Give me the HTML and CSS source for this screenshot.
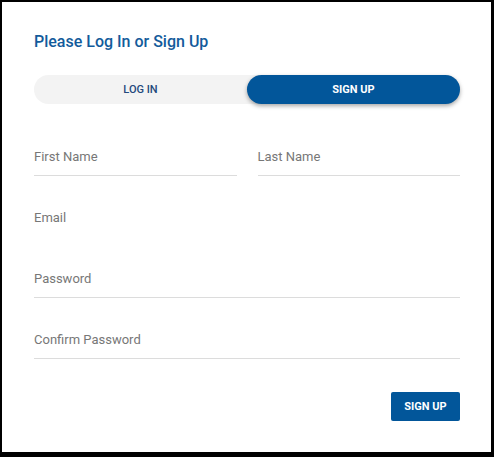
FILE: index.html
```html
<!DOCTYPE html>
<html lang="en">
<head>
<meta charset="utf-8">
<title>Please Log In or Sign Up</title>
<link rel="stylesheet" href="styles.css">
</head>
<body>
<div class="card">
  <h1 class="title">Please Log In or Sign Up</h1>
  <div class="toggle">
    <button class="tab">LOG IN</button>
    <button class="tab active">SIGN UP</button>
  </div>
  <form class="form">
    <div class="row two">
      <div class="field"><label>First Name</label><div class="line"></div></div>
      <div class="field"><label>Last Name</label><div class="line"></div></div>
    </div>
    <div class="field"><label>Email</label><div class="line none"></div></div>
    <div class="field"><label>Password</label><div class="line"></div></div>
    <div class="field last"><label>Confirm Password</label><div class="line"></div></div>
    <div class="actions"><button type="button" class="submit">SIGN UP</button></div>
  </form>
</div>
</body>
</html>
```
FILE: styles.css
```css
html, body {
  margin: 0;
  padding: 0;
  background: #000;
}
body {
  font-family: Roboto, "Liberation Sans", Arial, sans-serif;
}
.card {
  margin: 2px 3px 0 2px;
  height: 450px;
  box-sizing: border-box;
  background: #fff;
  padding: 31px 31px 0 32px;
  box-shadow: 0 1px 0 #a8a8a8;
}
.title {
  margin: 0;
  font-size: 16px;
  line-height: 18px;
  font-weight: 500;
  color: #135b9b;
}
.toggle {
  margin-top: 24px;
  display: grid;
  grid-template-columns: 1fr 1fr;
  height: 29px;
  background: #f3f3f3;
  border-radius: 15px;
}
.tab {
  border: 0;
  background: transparent;
  font-family: inherit;
  font-size: 11px;
  font-weight: 500;
  color: #23497c;
  border-radius: 15px;
  padding: 0;
  height: 29px;
}
.tab.active {
  background: #02569a;
  color: #fff;
  font-weight: 700;
  box-shadow: 0 2px 4px rgba(0, 0, 0, 0.35);
}
.form {
  margin-top: 45px;
}
.row.two {
  display: grid;
  grid-template-columns: 1fr 1fr;
  column-gap: 21px;
}
.field {
  margin-bottom: 34px;
}
.field.last {
  margin-bottom: 0;
}
.field label {
  display: block;
  font-size: 13px;
  line-height: 16px;
  color: #777;
}
.line {
  margin-top: 10px;
  border-bottom: 1px solid #dcdcdc;
}
.line.none {
  border-bottom-color: transparent;
}
.actions {
  display: flex;
  justify-content: flex-end;
  margin-top: 33px;
}
.submit {
  width: 69px;
  height: 29px;
  border: 0;
  border-radius: 2px;
  background: #02569a;
  color: #fff;
  font-family: inherit;
  font-size: 11px;
  font-weight: 700;
  padding: 0;
}
```
